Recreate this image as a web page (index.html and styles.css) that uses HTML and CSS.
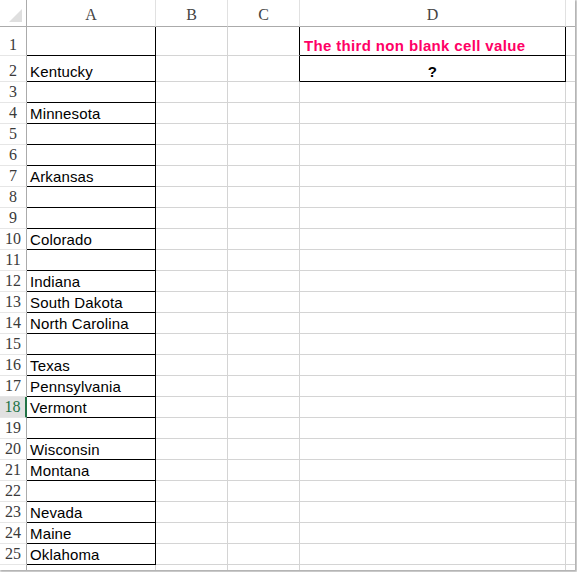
FILE: index.html
```html
<!DOCTYPE html>
<html>
<head>
<meta charset="utf-8">
<link rel="stylesheet" href="styles.css">
</head>
<body>
<div class="sheet">
  <div class="corner"><span class="tri"></span></div>
  <div class="h">A</div><div class="h">B</div><div class="h">C</div><div class="h">D</div><div class="h e"></div>

  <div class="rh">1</div><div class="c a"></div><div class="c"></div><div class="c cb"></div><div class="c d1">The third non blank cell value</div><div class="c e"></div>
  <div class="rh">2</div><div class="c a">Kentucky</div><div class="c"></div><div class="c cb"></div><div class="c d2">?</div><div class="c e"></div>
  <div class="rh">3</div><div class="c a"></div><div class="c"></div><div class="c"></div><div class="c"></div><div class="c e"></div>
  <div class="rh">4</div><div class="c a">Minnesota</div><div class="c"></div><div class="c"></div><div class="c"></div><div class="c e"></div>
  <div class="rh">5</div><div class="c a"></div><div class="c"></div><div class="c"></div><div class="c"></div><div class="c e"></div>
  <div class="rh">6</div><div class="c a"></div><div class="c"></div><div class="c"></div><div class="c"></div><div class="c e"></div>
  <div class="rh">7</div><div class="c a">Arkansas</div><div class="c"></div><div class="c"></div><div class="c"></div><div class="c e"></div>
  <div class="rh">8</div><div class="c a"></div><div class="c"></div><div class="c"></div><div class="c"></div><div class="c e"></div>
  <div class="rh">9</div><div class="c a"></div><div class="c"></div><div class="c"></div><div class="c"></div><div class="c e"></div>
  <div class="rh">10</div><div class="c a">Colorado</div><div class="c"></div><div class="c"></div><div class="c"></div><div class="c e"></div>
  <div class="rh">11</div><div class="c a"></div><div class="c"></div><div class="c"></div><div class="c"></div><div class="c e"></div>
  <div class="rh">12</div><div class="c a">Indiana</div><div class="c"></div><div class="c"></div><div class="c"></div><div class="c e"></div>
  <div class="rh">13</div><div class="c a">South Dakota</div><div class="c"></div><div class="c"></div><div class="c"></div><div class="c e"></div>
  <div class="rh">14</div><div class="c a">North Carolina</div><div class="c"></div><div class="c"></div><div class="c"></div><div class="c e"></div>
  <div class="rh">15</div><div class="c a"></div><div class="c"></div><div class="c"></div><div class="c"></div><div class="c e"></div>
  <div class="rh">16</div><div class="c a">Texas</div><div class="c"></div><div class="c"></div><div class="c"></div><div class="c e"></div>
  <div class="rh">17</div><div class="c a">Pennsylvania</div><div class="c"></div><div class="c"></div><div class="c"></div><div class="c e"></div>
  <div class="rh sel">18</div><div class="c a">Vermont</div><div class="c"></div><div class="c"></div><div class="c"></div><div class="c e"></div>
  <div class="rh">19</div><div class="c a"></div><div class="c"></div><div class="c"></div><div class="c"></div><div class="c e"></div>
  <div class="rh">20</div><div class="c a">Wisconsin</div><div class="c"></div><div class="c"></div><div class="c"></div><div class="c e"></div>
  <div class="rh">21</div><div class="c a">Montana</div><div class="c"></div><div class="c"></div><div class="c"></div><div class="c e"></div>
  <div class="rh">22</div><div class="c a"></div><div class="c"></div><div class="c"></div><div class="c"></div><div class="c e"></div>
  <div class="rh">23</div><div class="c a">Nevada</div><div class="c"></div><div class="c"></div><div class="c"></div><div class="c e"></div>
  <div class="rh">24</div><div class="c a">Maine</div><div class="c"></div><div class="c"></div><div class="c"></div><div class="c e"></div>
  <div class="rh">25</div><div class="c a">Oklahoma</div><div class="c"></div><div class="c"></div><div class="c"></div><div class="c e"></div>
  <div class="rh last"></div><div class="c last"></div><div class="c last"></div><div class="c last"></div><div class="c last"></div><div class="c e last"></div>
</div>
</body>
</html>
```

FILE: styles.css
```css
html, body {
  margin: 0;
  padding: 0;
  background: #ffffff;
}
body {
  width: 577px;
  height: 572px;
  overflow: hidden;
}
.sheet {
  width: 575px;
  height: 570px;
  overflow: hidden;
  display: grid;
  grid-template-columns: 27px 129px 72px 72px 266px 9px;
  grid-template-rows: 27px 29px 26px repeat(23, 21px) 5px;
  background: #ffffff;
  box-shadow: 1px 1px 2px 1px #b0b0b0;
}
.sheet > div {
  box-sizing: border-box;
  overflow: hidden;
  white-space: nowrap;
}
.corner {
  border-right: 1px solid #ababab;
  border-bottom: 1px solid #ababab;
  position: relative;
}
.tri {
  position: absolute;
  right: 4px;
  bottom: 4px;
  width: 0;
  height: 0;
  border-left: 13px solid transparent;
  border-bottom: 13px solid #dfdfdf;
}
.h {
  border-right: 1px solid #e1e1e1;
  border-bottom: 1px solid #ababab;
  font-family: "Liberation Serif", "Times New Roman", serif;
  font-size: 16px;
  color: #444444;
  text-align: center;
  line-height: 18px;
  padding-top: 6px;
}
.h.e {
  border-right: none;
}
.rh {
  border-right: 1px solid #ababab;
  border-bottom: 1px solid #e6e6e6;
  font-family: "Liberation Serif", "Times New Roman", serif;
  font-size: 16px;
  color: #3a3a3a;
  display: flex;
  align-items: flex-end;
  justify-content: center;
  line-height: 18px;
  padding-bottom: 1px;
}
.rh.sel {
  background: #e1e1e1;
  color: #217346;
  border-right: 2px solid #217346;
}
.c {
  border-right: 1px solid #d4d4d4;
  border-bottom: 1px solid #d4d4d4;
  font-family: "Liberation Sans", Arial, sans-serif;
  font-size: 15px;
  letter-spacing: 0.15px;
  color: #000000;
  display: flex;
  align-items: flex-end;
  line-height: 17px;
  padding: 0 3px 1px 3px;
}
.c.e {
  border-right: none;
}
.a {
  border-right-color: #000000;
  border-bottom-color: #000000;
}
.cb {
  border-right-color: #000000;
}
.d1 {
  border-right-color: #000000;
  border-bottom-color: #000000;
  color: #ff0066;
  font-weight: bold;
  letter-spacing: 0.35px;
  padding-left: 4px;
}
.d2 {
  border-right-color: #000000;
  border-bottom-color: #000000;
  font-weight: bold;
  justify-content: center;
}
.last {
  border-bottom: none;
}
.rh.last {
  border-bottom: none;
}
```
